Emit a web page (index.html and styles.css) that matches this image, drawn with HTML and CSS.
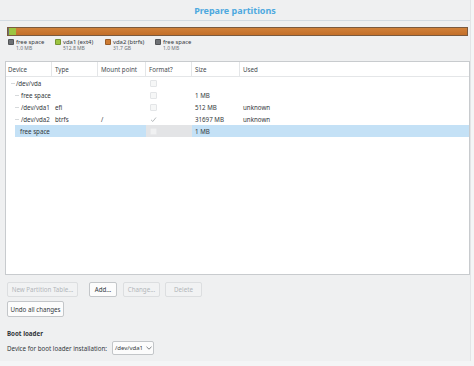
FILE: index.html
```html
<!DOCTYPE html>
<html>
<head>
<meta charset="utf-8">
<link rel="stylesheet" href="styles.css">
</head>
<body>
<div class="page">
  <div class="title">Prepare partitions</div>
  <div class="content">
    <div class="bar">
      <div class="seg seg-free" style="width:1px"></div>
      <div class="seg seg-efi" style="width:7px"></div>
      <div class="seg seg-btrfs"></div>
    </div>
    <div class="legend">
      <div class="litem"><span class="sq sq-free"></span><span class="lname">free space</span><span class="lsize">1.0 MB</span></div>
      <div class="litem"><span class="sq sq-efi"></span><span class="lname">vda1 (ext4)</span><span class="lsize">512.8 MB</span></div>
      <div class="litem"><span class="sq sq-btrfs"></span><span class="lname">vda2 (btrfs)</span><span class="lsize">31.7 GB</span></div>
      <div class="litem"><span class="sq sq-free"></span><span class="lname">free space</span><span class="lsize">1.0 MB</span></div>
    </div>

    <div class="table">
      <div class="row head">
        <div class="cell">Device</div>
        <div class="cell">Type</div>
        <div class="cell">Mount point</div>
        <div class="cell">Format?</div>
        <div class="cell">Size</div>
        <div class="cell">Used</div>
      </div>
      <div class="row">
        <div class="cell dev lvl0"><span class="branch"></span>/dev/vda</div>
        <div class="cell"></div>
        <div class="cell"></div>
        <div class="cell"><span class="chk"></span></div>
        <div class="cell"></div>
        <div class="cell"></div>
      </div>
      <div class="row">
        <div class="cell dev lvl1"><span class="branch"></span>free space</div>
        <div class="cell"></div>
        <div class="cell"></div>
        <div class="cell"><span class="chk"></span></div>
        <div class="cell">1 MB</div>
        <div class="cell"></div>
      </div>
      <div class="row">
        <div class="cell dev lvl1"><span class="branch"></span>/dev/vda1</div>
        <div class="cell">efi</div>
        <div class="cell"></div>
        <div class="cell"><span class="chk"></span></div>
        <div class="cell">512 MB</div>
        <div class="cell">unknown</div>
      </div>
      <div class="row">
        <div class="cell dev lvl1"><span class="branch"></span>/dev/vda2</div>
        <div class="cell">btrfs</div>
        <div class="cell">/</div>
        <div class="cell"><span class="chk checked"><svg width="7" height="7" viewBox="0 0 7 7"><polyline points="1,3.8 2.8,5.5 6,1.5" fill="none" stroke="#aeb2b6" stroke-width="0.9"/></svg></span></div>
        <div class="cell">31697 MB</div>
        <div class="cell">unknown</div>
      </div>
      <div class="row selected">
        <div class="cell dev lvl1">free space</div>
        <div class="cell"></div>
        <div class="cell"></div>
        <div class="cell fmt"><span class="chk"></span></div>
        <div class="cell">1 MB</div>
        <div class="cell"></div>
      </div>
    </div>

    <div class="btnrow">
      <button class="btn disabled w-new">New Partition Table...</button>
      <button class="btn w-add">Add...</button>
      <button class="btn disabled w-change">Change...</button>
      <button class="btn disabled w-delete">Delete</button>
    </div>
    <div class="btnrow undo">
      <button class="btn w-undo">Undo all changes</button>
    </div>

    <div class="boot-title">Boot loader</div>
    <div class="boot-row">
      <span class="boot-label">Device for boot loader installation:</span>
      <span class="combo"><span class="combo-text">/dev/vda1</span><svg width="6" height="4" viewBox="0 0 6 4"><polyline points="0.5,0.8 3,3.2 5.5,0.8" fill="none" stroke="#5b6065" stroke-width="0.8"/></svg></span>
    </div>
  </div>
</div>
</body>
</html>
```

FILE: styles.css
```css
* { box-sizing: border-box; }
html, body { margin: 0; padding: 0; }
body {
  background: #f4f5f6;
  font-family: "Noto Sans", "DejaVu Sans", sans-serif;
  font-size: 6.2px;
  color: #33383d;
}
.page {
  width: 471px;
  height: 361px;
  background: #eff0f1;
  border-right: 1px solid #e2e4e6;
}
.title {
  height: 21px;
  border-bottom: 1px solid #d3dbe2;
  text-align: center;
  font-weight: bold;
  font-size: 9px;
  line-height: 21px;
  color: #4ea9df;
}
.content {
  padding-top: 6px;
}
.bar {
  display: flex;
  margin-left: 7px;
  width: 461px;
  height: 9px;
  border: 1px solid #7b5a3e;
  background: #c9762f;
}
.seg { height: 100%; }
.seg-free { background: #6e7175; }
.seg-efi { background: #9cc440; }
.seg-btrfs { flex: 1; background: linear-gradient(#d0813a, #c36f29); }

.legend {
  display: grid;
  grid-template-columns: 47px 50px 50px auto;
  margin-top: 2px;
  padding-left: 8px;
  height: 13px;
}
.litem {
  display: grid;
  grid-template-columns: 8px auto;
  grid-template-rows: 7px 6px;
  align-items: center;
}
.sq {
  width: 6px;
  height: 6px;
  border-radius: 1px;
  border: 1px solid rgba(0,0,0,0.25);
}
.sq-free { background: #6e7175; }
.sq-efi { background: #9cc440; }
.sq-btrfs { background: #cc7a32; }
.lname { font-size: 5.9px; color: #33383d; white-space: nowrap; }
.lsize { grid-column: 2; font-size: 5px; color: #6d7277; white-space: nowrap; }

.table {
  margin-top: 10px;
  margin-left: 5px;
  width: 465px;
  height: 214px;
  border: 1px solid #c8cbce;
  background: #ffffff;
}
.row {
  display: grid;
  grid-template-columns: 46px 46px 48px 46px 48px 1fr;
  height: 12px;
  align-items: stretch;
}
.row.head {
  height: 15px;
  border-bottom: 1px solid #e4e6e8;
  color: #464b50;
}
.cell {
  display: flex;
  align-items: center;
  padding-left: 3px;
  white-space: nowrap;
}
.row.head .cell { border-right: 1px solid #e4e6e8; padding-left: 3px; }
.row.head .cell:first-child { padding-left: 2px; }
.row.head .cell:last-child { border-right: none; }
.dev { padding-left: 0; }
.lvl0 { padding-left: 5px; }
.lvl0 .branch { width: 4px; margin-right: 1px; }
.lvl1 { padding-left: 9px; }
.branch {
  display: inline-block;
  width: 4px;
  height: 1px;
  background: #d6d9db;
  margin-right: 2px;
}
.selected .cell { background: #c4e1f6; }
.selected .dev {
  background: linear-gradient(to right, #ffffff 9px, #c4e1f6 9px);
  padding-left: 14px;
}
.selected .fmt { background: #e3e4e6; }
.chk {
  display: inline-block;
  width: 7px;
  height: 7px;
  margin-left: 1px;
  border: 1px solid #e3e5e7;
  border-radius: 1px;
  background: #f6f7f7;
}
.chk.checked {
  border: none;
  background: none;
}
.chk svg { display: block; }
.selected .chk { background: #f0f1f2; border-color: #e8e9eb; }

.btnrow {
  display: flex;
  margin-top: 7px;
  padding-left: 7px;
  height: 15px;
}
.btnrow.undo { margin-top: 4px; height: 16px; }
.btn {
  font-family: inherit;
  font-size: 6.2px;
  color: #33383d;
  background: #fcfcfc;
  border: 1px solid #c3c6c9;
  border-radius: 2px;
  padding: 0;
  height: 100%;
}
.btn.disabled {
  background: #f1f2f3;
  border-color: #dcdee0;
  color: #b2b6ba;
}
.w-new { width: 71px; }
.w-add { width: 28px; margin-left: 11px; }
.w-change { width: 37px; margin-left: 6px; }
.w-delete { width: 37px; margin-left: 5px; }
.w-undo { width: 57px; }

.boot-title {
  margin-top: 12px;
  padding-left: 7px;
  font-weight: bold;
  height: 9px;
  line-height: 9px;
  color: #2f3439;
}
.boot-row {
  display: flex;
  align-items: center;
  margin-top: 3px;
  padding-left: 7px;
  height: 14px;
}
.boot-label { margin-right: 5px; }
.combo {
  display: flex;
  align-items: center;
  gap: 3px;
  width: 42px;
  height: 14px;
  padding: 0 2px 0 2px;
  background: #fcfcfc;
  border: 1px solid #c3c6c9;
  border-radius: 2px;
  white-space: nowrap;
}
.combo-text { font-size: 6px; }
.combo svg { display: block; flex: none; }
```
